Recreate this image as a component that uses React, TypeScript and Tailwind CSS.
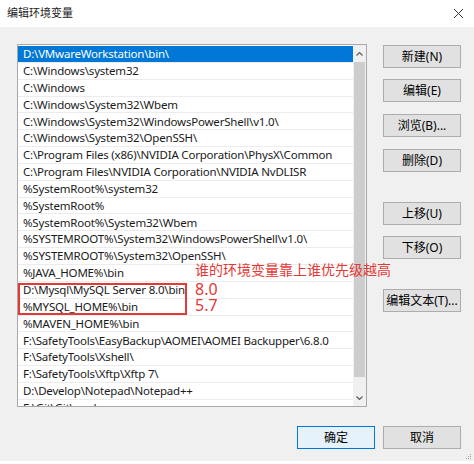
import React from "react";

const rows = [
  "D:\\VMwareWorkstation\\bin\\",
  "C:\\Windows\\system32",
  "C:\\Windows",
  "C:\\Windows\\System32\\Wbem",
  "C:\\Windows\\System32\\WindowsPowerShell\\v1.0\\",
  "C:\\Windows\\System32\\OpenSSH\\",
  "C:\\Program Files (x86)\\NVIDIA Corporation\\PhysX\\Common",
  "C:\\Program Files\\NVIDIA Corporation\\NVIDIA NvDLISR",
  "%SystemRoot%\\system32",
  "%SystemRoot%",
  "%SystemRoot%\\System32\\Wbem",
  "%SYSTEMROOT%\\System32\\WindowsPowerShell\\v1.0\\",
  "%SYSTEMROOT%\\System32\\OpenSSH\\",
  "%JAVA_HOME%\\bin",
  "D:\\Mysql\\MySQL Server 8.0\\bin",
  "%MYSQL_HOME%\\bin",
  "%MAVEN_HOME%\\bin",
  "F:\\SafetyTools\\EasyBackup\\AOMEI\\AOMEI Backupper\\6.8.0",
  "F:\\SafetyTools\\Xshell\\",
  "F:\\SafetyTools\\Xftp\\Xftp 7\\",
  "D:\\Develop\\Notepad\\Notepad++",
  "F:\\Git\\Git\\cmd",
];

function Btn({ label, className = "" }: { label: string; className?: string }) {
  return (
    <div
      className={`h-[23px] w-[78px] flex items-center justify-center border border-[#adadad] bg-[#e1e1e1] text-[12px] text-black ${className}`}
    >
      {label}
    </div>
  );
}

export default function App() {
  return (
    <div
      className="w-[474px] h-[464px] flex flex-col bg-white overflow-hidden"
      style={{ fontFamily: '"Noto Sans", "Noto Sans CJK SC", sans-serif' }}
    >
      {/* title bar */}
      <div className="h-[27px] flex items-center justify-between pl-[7px] pr-[11px] bg-white">
        <span className="text-[11px] text-[#222]">编辑环境变量</span>
        <svg width="9" height="9" viewBox="0 0 9 9">
          <path d="M0 0L9 9M9 0L0 9" stroke="#333" strokeWidth="1" />
        </svg>
      </div>

      <div className="relative h-[434px] bg-[#f0f0f0] pl-[17px] pt-[17px] pr-[13px] flex flex-col">
        <div className="flex gap-[16px]">
          {/* list */}
          <div className="w-[350px] h-[363px] border border-[#a9a9a9] bg-white flex overflow-hidden">
            <div className="flex-1 pt-[1px] overflow-hidden">
              {rows.map((r, i) => (
                <div
                  key={i}
                  className={`h-[16.85px] flex items-center pl-[5px] whitespace-nowrap text-[11.5px] tracking-[-0.2px] leading-none border-b border-[#ececec] ${
                    i === 0 ? "bg-[#0078d7] text-white" : "text-[#1a1a1a]"
                  }`}
                >
                  {r}
                </div>
              ))}
            </div>
            {/* scrollbar */}
            <div className="w-[13px] bg-[#f0f0f0] flex flex-col items-center">
              <div className="h-[17px] w-full flex items-center justify-center">
                <svg width="7" height="4" viewBox="0 0 7 4">
                  <path d="M0.5 3.5L3.5 0.5L6.5 3.5" stroke="#606060" fill="none" strokeWidth="1.2" />
                </svg>
              </div>
              <div className="w-[11px] h-[315px] bg-[#cdcdcd]" />
              <div className="flex-1" />
              <div className="h-[17px] w-full flex items-center justify-center">
                <svg width="7" height="4" viewBox="0 0 7 4">
                  <path d="M0.5 0.5L3.5 3.5L6.5 0.5" stroke="#606060" fill="none" strokeWidth="1.2" />
                </svg>
              </div>
            </div>
          </div>

          {/* right buttons */}
          <div className="flex flex-col pt-[1px]">
            <Btn label="新建(N)" />
            <Btn label="编辑(E)" className="mt-[11px]" />
            <Btn label="浏览(B)..." className="mt-[12px]" />
            <Btn label="删除(D)" className="mt-[12px]" />
            <Btn label="上移(U)" className="mt-[30px]" />
            <Btn label="下移(O)" className="mt-[11px]" />
            <Btn label="编辑文本(T)..." className="mt-[30px]" />
          </div>
        </div>

        {/* bottom buttons */}
        <div className="mt-[19px] flex justify-end gap-[8px]">
          <div className="h-[23px] w-[78px] flex items-center justify-center border border-[#0078d7] bg-[#e5f1fb] text-[12px] text-black">
            确定
          </div>
          <Btn label="取消" />
        </div>

        {/* annotations */}
        <div className="absolute left-[18px] top-[256px] w-[169px] h-[32px] border-2 border-[#e53935]" />
        <div className="absolute left-[195px] top-[236px] text-[14px] leading-none text-[#e53935]">
          谁的环境变量靠上谁优先级越高
        </div>
        <div className="absolute left-[195px] top-[254px] text-[16px] leading-none text-[#e53935]">8.0</div>
        <div className="absolute left-[195px] top-[270px] text-[16px] leading-none text-[#e53935]">5.7</div>

        {/* resize grip */}
        <div className="absolute right-[3px] bottom-[2px] grid grid-cols-3 gap-[1px]">
          {[0, 0, 1, 0, 1, 1, 1, 1, 1].map((v, i) => (
            <div key={i} className={`w-[1px] h-[1px] ${v ? "bg-[#a0a0a0]" : ""}`} />
          ))}
        </div>
      </div>
    </div>
  );
}
